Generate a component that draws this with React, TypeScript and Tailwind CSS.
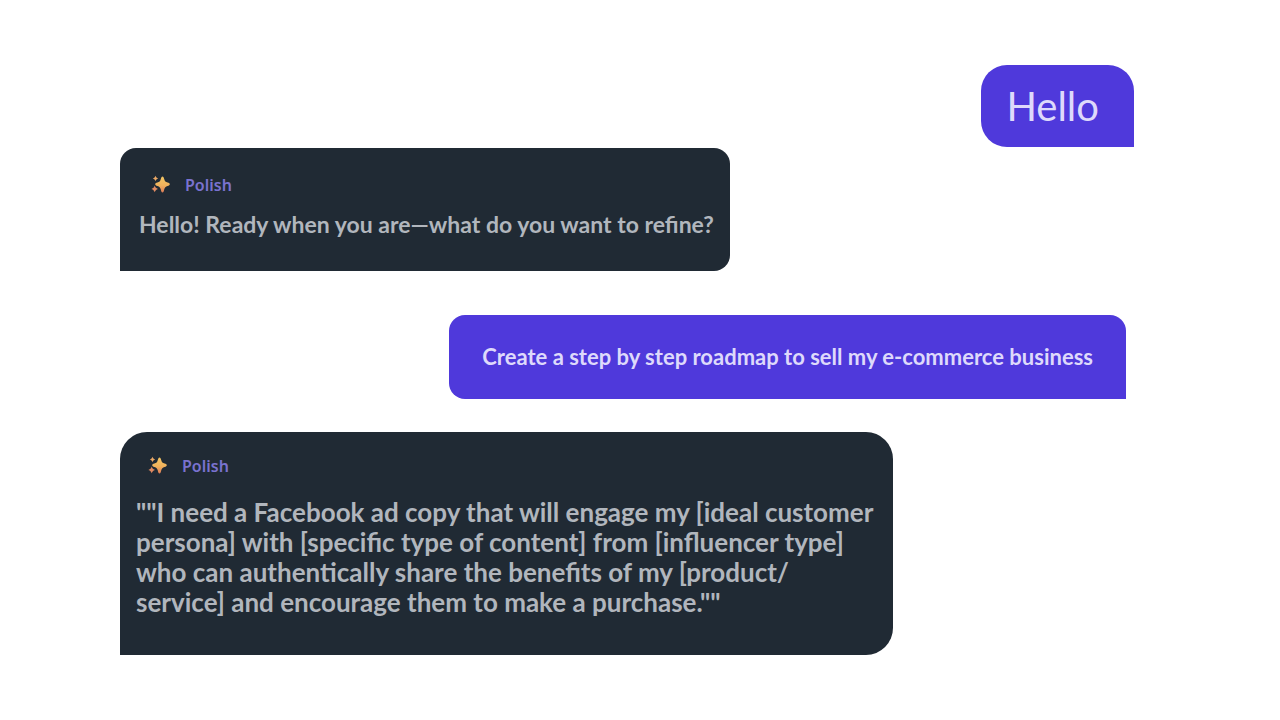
import type { ReactNode } from 'react';

function Sparkles() {
  return (
    <svg viewBox="0 0 20 20" className="h-5 w-5 shrink-0" aria-hidden="true">
      <defs>
        <linearGradient id="spark" x1="0" y1="0" x2="0" y2="1">
          <stop offset="0" stopColor="#f3c664" />
          <stop offset="0.55" stopColor="#f0b25c" />
          <stop offset="1" stopColor="#dc7a58" />
        </linearGradient>
      </defs>
      <path
        fill="url(#spark)"
        d="M11.500 1.500c.9 0 1.300 1 1.700 2.600.6 2.300 1.300 3 3.400 3.500 1.400.4 2.200.8 2.200 1.600s-.8 1.300-2.200 1.700c-2.100.6-2.800 1.300-3.400 3.700-.4 1.800-.8 3-1.700 3s-1.300-1.200-1.700-3c-.6-2.400-1.300-3.100-3.400-3.700-1.400-.4-2.200-.9-2.200-1.700s.8-1.200 2.200-1.600c2.100-.5 2.800-1.200 3.400-3.500.4-1.600.8-2.600 1.700-2.600z"
      />
      <path fill="#e9a765" d="M4.500.8c.7 1.800 1 2.100 2.700 2.700-1.700.6-2 .9-2.700 2.700-.7-1.800-1-2.100-2.700-2.700C3.500 2.900 3.800 2.600 4.500.8z" />
      <path fill="#e08a62" d="M3.700 10.500c.9 2.300 1.200 2.600 3.300 3.400-2.100.8-2.400 1.100-3.300 3.400-.9-2.300-1.200-2.600-3.300-3.400 2.100-.8 2.400-1.100 3.300-3.400z" />
    </svg>
  );
}

function PolishLabel() {
  return (
    <div className="flex items-center gap-3.5 pl-3">
      <Sparkles />
      <span className="font-['Noto_Sans',sans-serif] text-base leading-6 font-semibold text-[#7a72cf]">
        Polish
      </span>
    </div>
  );
}

function UserMessage({ className, children }: { className: string; children: ReactNode }) {
  return (
    <div className={`self-end rounded-br-none bg-[#4f39db] text-[#ded9fb] ${className}`}>
      {children}
    </div>
  );
}

function BotMessage({ className, children }: { className: string; children: ReactNode }) {
  return (
    <div className={`self-start bg-[#202a34] font-bold text-[#b1b6bd] ${className}`}>
      <PolishLabel />
      {children}
    </div>
  );
}

export default function App() {
  return (
    <main className="flex min-h-screen flex-col bg-white pt-[65px] pr-[146px] pb-16 pl-[120px] font-['Lato',sans-serif]">
      <UserMessage className="rounded-t-[26px] rounded-bl-[26px] py-4 pr-[35px] pl-[25px]">
        <p className="text-[40px] leading-[50px]">Hello</p>
      </UserMessage>

      <BotMessage className="mt-px rounded-t-2xl rounded-br-2xl pt-[25px] pr-4 pb-[33px] pl-[19px]">
        <p className="mt-[13px] text-[23px] leading-7">
          Hello! Ready when you are—what do you want to refine?
        </p>
      </BotMessage>

      <UserMessage className="mt-11 mr-2 rounded-t-2xl rounded-bl-2xl px-[33px] py-7">
        <p className="text-[22px] leading-7 font-bold">
          Create a step by step roadmap to sell my e-commerce business
        </p>
      </UserMessage>

      <BotMessage className="mt-[33px] max-w-[773px] rounded-t-[27px] rounded-br-[27px] px-4 pt-[22px] pb-[38px]">
        <p className="mt-[19px] text-[26px] leading-[30px]">
          ""I need a Facebook ad copy that will engage my [ideal customer persona] with [specific
          type of content] from [influencer type] who can authentically share the benefits of my
          [product/
          <br />
          service] and encourage them to make a purchase.""
        </p>
      </BotMessage>
    </main>
  );
}
